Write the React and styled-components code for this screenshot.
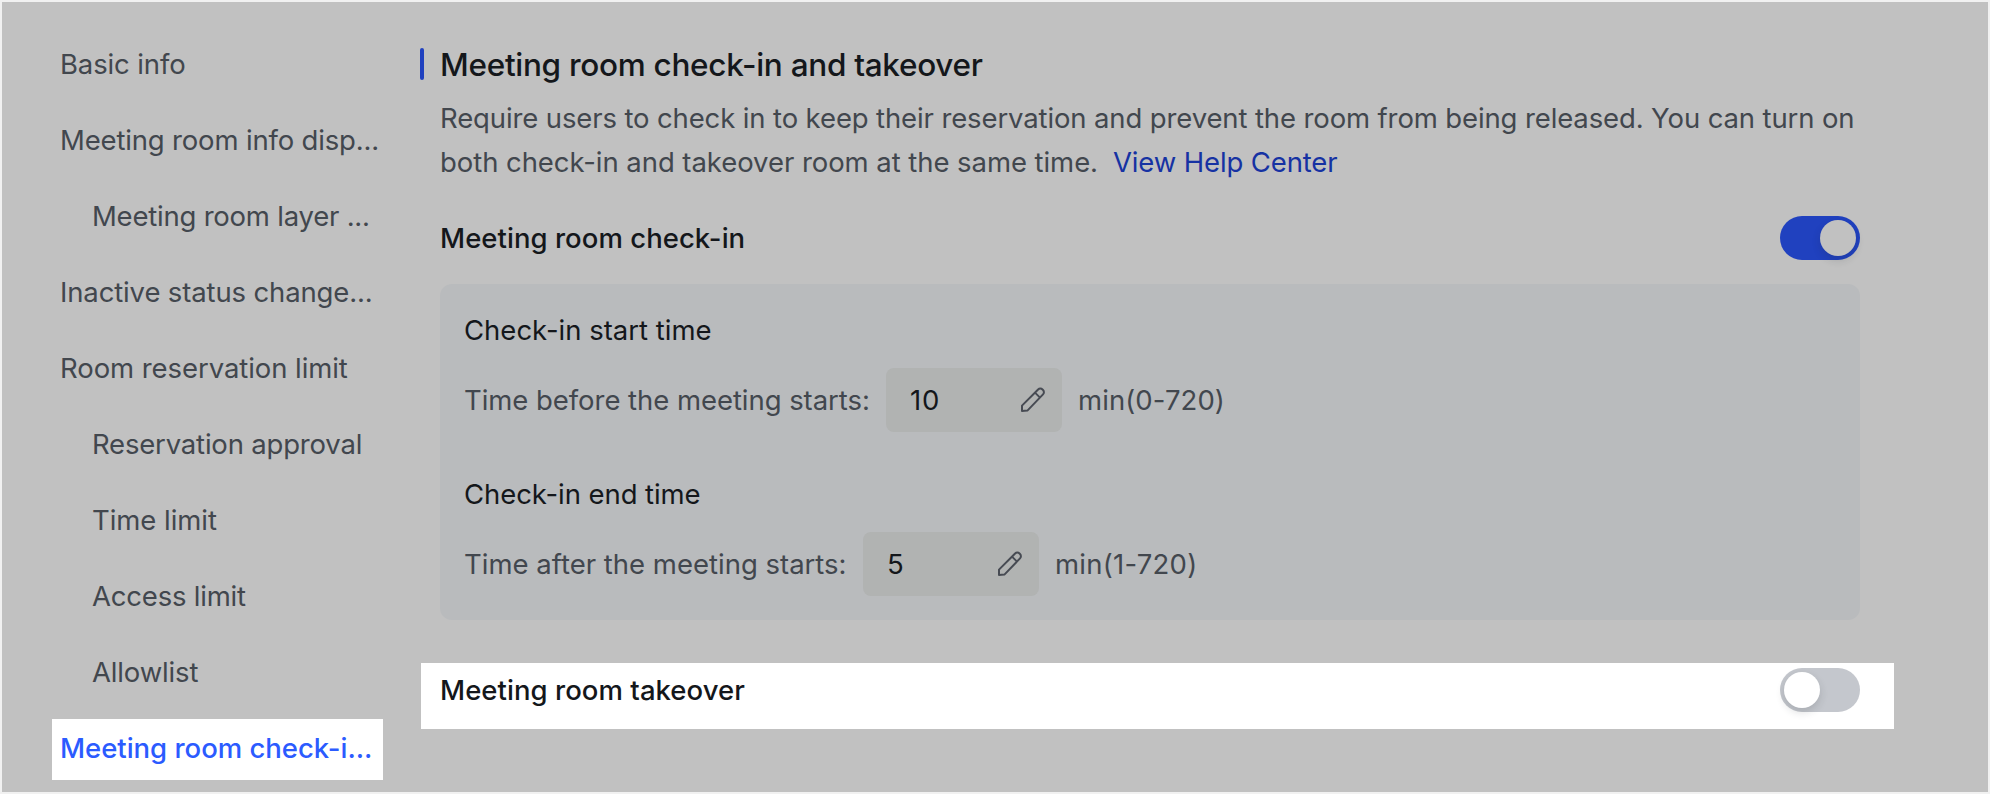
import React, {useState} from 'react'
import styled, {createGlobalStyle} from 'styled-components'

const GlobalStyle = createGlobalStyle`
  * {
    box-sizing: border-box;
  }
  body {
    margin: 0;
    background-color: #f4f4f4;
    font-family: Inter, "Liberation Sans", sans-serif;
    font-size: 27.5px;
    color: #14171b;
  }
`

const Page = styled.div`
  display: flex;
  height: 794px;
  padding-left: 50px;
  overflow: hidden;
  background-color: #c1c1c1;
  border: 2px solid #f1f1f1;
`

const Sidebar = styled.nav`
  display: flex;
  flex-direction: column;
  width: 331px;
  padding-top: 33px;
`

const NavItem = styled.a`
  flex-shrink: 0;
  height: 61px;
  margin-bottom: 15px;
  padding-left: ${({$nested}) => ($nested ? 40 : 8)}px;
  line-height: 58px;
  white-space: nowrap;
  letter-spacing: ${({$tracking}) => $tracking || 0}px;
  font-weight: ${({$active}) => ($active ? 500 : 400)};
  color: ${({$active}) => ($active ? '#2b5bff' : '#42474e')};
  background-color: ${({$active}) => ($active ? '#fff' : 'transparent')};
`

const Content = styled.main`
  display: flex;
  flex-direction: column;
  width: 1474px;
  margin-left: 37px;
  padding-top: 46px;
`

const Title = styled.h1`
  display: flex;
  align-items: center;
  height: 32px;
  margin: 0;
  font-size: 31.5px;
  font-weight: 500;
  letter-spacing: -0.29px;

  &::before {
    content: '';
    width: 4px;
    height: 32px;
    margin-right: 16px;
    border-radius: 2px;
    background-color: #2041bf;
  }
`

const Description = styled.p`
  margin: 16px 0 0 20px;
  line-height: 44px;
  letter-spacing: -0.125px;
  color: #42474e;
  white-space: nowrap;
`

const SecondLine = styled.span`
  display: block;
  letter-spacing: -0.06px;
`

const HelpLink = styled.a`
  margin-left: 15px;
  letter-spacing: -0.13px;
  color: #1632a3;
`

const SettingRow = styled.div`
  display: flex;
  align-items: center;
  justify-content: space-between;
  height: 44px;
  margin: 32px 34px 0 20px;
`

const HighlightedRow = styled(SettingRow)`
  height: 66px;
  margin: 43px 0 0 1px;
  padding: 0 34px 12px 19px;
  background-color: #fff;
`

const SettingName = styled.h2`
  margin: 0;
  font-size: 27.5px;
  font-weight: 500;
  letter-spacing: ${({$tracking}) => $tracking || 0}px;
`

const Switch = styled.button`
  display: flex;
  align-items: center;
  justify-content: ${({$on}) => ($on ? 'flex-end' : 'flex-start')};
  width: 80px;
  height: 44px;
  padding: 4px;
  border: 0;
  border-radius: 22px;
  background-color: ${({$on}) => ($on ? '#2041bf' : '#c4c7cd')};
`

const Knob = styled.span`
  width: 36px;
  height: 36px;
  border-radius: 50%;
  background-color: ${({$on}) => ($on ? '#c1c1c1' : '#fff')};
  box-shadow: 0 4px 8px rgba(31, 35, 41, 0.16);
`

const Card = styled.section`
  height: 336px;
  margin: 24px 34px 0 20px;
  padding: 24px;
  border-radius: 12px;
  background-color: #b9bbbd;
`

const TimeSetting = styled.div`
  height: 164px;
`

const TimeTitle = styled.h3`
  margin: 0;
  font-size: 27.5px;
  font-weight: 400;
  line-height: 44px;
  letter-spacing: ${({$tracking}) => $tracking || 0}px;
`

const TimeRow = styled.div`
  display: flex;
  align-items: center;
  height: 64px;
  margin-top: 16px;
  color: #42474e;
`

const Label = styled.span`
  width: ${({$width}) => $width}px;
  white-space: nowrap;
  letter-spacing: ${({$tracking}) => $tracking || 0}px;
`

const MinuteField = styled.div`
  display: flex;
  align-items: center;
  justify-content: space-between;
  width: 176px;
  height: 64px;
  margin-right: 16px;
  padding: 0 15px 0 24px;
  border-radius: 8px;
  background-color: #b1b3b2;
`

const Minutes = styled.span`
  letter-spacing: 0.9px;
  color: #14171b;
`

const Unit = styled.span`
  letter-spacing: ${({$tracking}) => $tracking || 0}px;
`

const navItems = [
  {label: 'Basic info', tracking: -0.13},
  {label: 'Meeting room info disp...', tracking: -0.17},
  {label: 'Meeting room layer ...', nested: true, tracking: -0.22},
  {label: 'Inactive status change...', tracking: -0.14},
  {label: 'Room reservation limit', tracking: -0.07},
  {label: 'Reservation approval', nested: true, tracking: -0.19},
  {label: 'Time limit', nested: true, tracking: -0.05},
  {label: 'Access limit', nested: true, tracking: -0.2},
  {label: 'Allowlist', nested: true, tracking: -0.15},
  {label: 'Meeting room check-i...', active: true, tracking: -0.02},
]

function PencilIcon() {
  return (
    <svg width="28" height="28" viewBox="0 0 28 28" fill="none" stroke="#474b53" strokeWidth="2" strokeLinejoin="round">
      <path d="M3 25V19.6L19.1 3.5a3.1 3.1 0 0 1 4.4 0l.5.5a3.1 3.1 0 0 1 0 4.4L8.4 24.6Z" />
      <path d="M16 6.6L21 11.6" />
    </svg>
  )
}

function Toggle({defaultOn, label}) {
  const [on, setOn] = useState(defaultOn)

  return (
    <Switch $on={on} aria-label={label} onClick={() => setOn(!on)}>
      <Knob $on={on} />
    </Switch>
  )
}

export default function App() {
  return (
    <>
      <GlobalStyle />
      <Page>
        <Sidebar>
          {navItems.map(({label, nested, active, tracking}) => (
            <NavItem key={label} $nested={nested} $active={active} $tracking={tracking}>
              {label}
            </NavItem>
          ))}
        </Sidebar>
        <Content>
          <Title>Meeting room check-in and takeover</Title>
          <Description>
            Require users to check in to keep their reservation and prevent the room from being released. You can turn on
            <SecondLine>
              both check-in and takeover room at the same time.
              <HelpLink>View Help Center</HelpLink>
            </SecondLine>
          </Description>
          <SettingRow>
            <SettingName $tracking={0.04}>Meeting room check-in</SettingName>
            <Toggle defaultOn={true} label="Meeting room check-in" />
          </SettingRow>
          <Card>
            <TimeSetting>
              <TimeTitle>Check-in start time</TimeTitle>
              <TimeRow>
                <Label $width={422} $tracking={-0.05}>Time before the meeting starts:</Label>
                <MinuteField>
                  <Minutes>10</Minutes>
                  <PencilIcon />
                </MinuteField>
                <Unit $tracking={0.08}>min(0-720)</Unit>
              </TimeRow>
            </TimeSetting>
            <TimeSetting>
              <TimeTitle $tracking={-0.08}>Check-in end time</TimeTitle>
              <TimeRow>
                <Label $width={399}>Time after the meeting starts:</Label>
                <MinuteField>
                  <Minutes>5</Minutes>
                  <PencilIcon />
                </MinuteField>
                <Unit $tracking={0.25}>min(1-720)</Unit>
              </TimeRow>
            </TimeSetting>
          </Card>
          <HighlightedRow>
            <SettingName $tracking={0.05}>Meeting room takeover</SettingName>
            <Toggle defaultOn={false} label="Meeting room takeover" />
          </HighlightedRow>
        </Content>
      </Page>
    </>
  )
}
